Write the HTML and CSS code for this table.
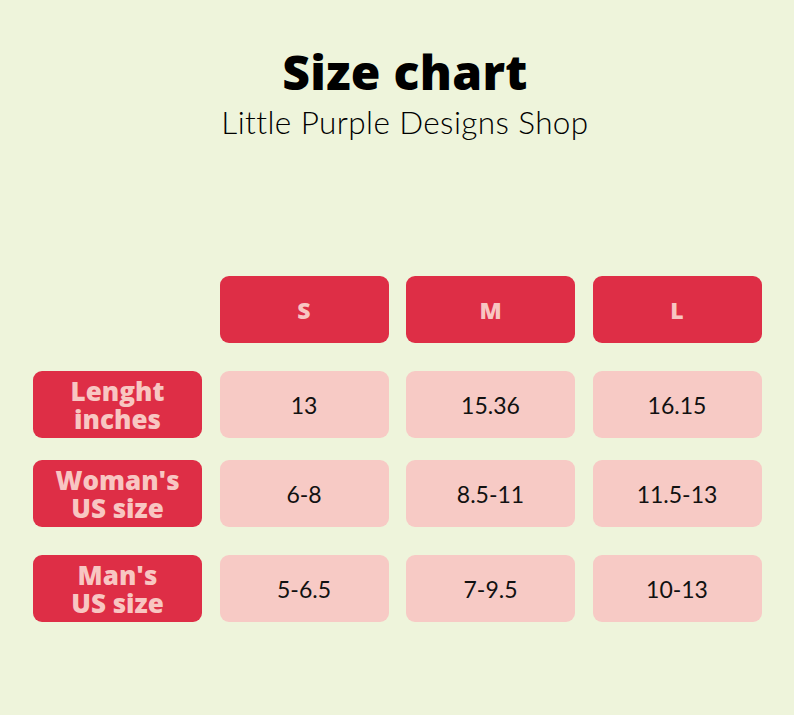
FILE: index.html
```html
<!DOCTYPE html>
<html>
<head>
<meta charset="utf-8">
<link rel="stylesheet" href="styles.css">
</head>
<body>
<div class="page">
  <header class="head">
    <h1 class="title">Size chart</h1>
    <p class="subtitle">Little Purple Designs Shop</p>
  </header>
  <div class="chart">
    <div class="row row-head">
      <div class="spacer"></div>
      <div class="cell hcell">S</div>
      <div class="cell hcell">M</div>
      <div class="cell hcell">L</div>
    </div>
    <div class="row row-1">
      <div class="cell label">Lenght<br>inches</div>
      <div class="cell val">13</div>
      <div class="cell val">15.36</div>
      <div class="cell val">16.15</div>
    </div>
    <div class="row row-2">
      <div class="cell label">Woman's<br>US size</div>
      <div class="cell val">6-8</div>
      <div class="cell val">8.5-11</div>
      <div class="cell val">11.5-13</div>
    </div>
    <div class="row row-3">
      <div class="cell label">Man's<br>US size</div>
      <div class="cell val">5-6.5</div>
      <div class="cell val">7-9.5</div>
      <div class="cell val">10-13</div>
    </div>
  </div>
</div>
</body>
</html>
```
FILE: styles.css
```css
html, body {
  margin: 0;
  padding: 0;
  background: #eef4db;
}
.page {
  width: 794px;
  height: 715px;
  box-sizing: border-box;
  padding-top: 42px;
  font-family: "Open Sans", sans-serif;
}
.head {
  text-align: center;
  padding-left: 16px;
}
.title {
  margin: 0;
  font-family: "Open Sans", sans-serif;
  font-weight: 800;
  font-size: 48px;
  line-height: 60px;
  color: #000;
  letter-spacing: 0.3px;
}
.subtitle {
  margin: 0;
  font-family: "Lato", sans-serif;
  font-weight: 300;
  font-size: 31.5px;
  line-height: 40px;
  color: #000;
  letter-spacing: 0.4px;
}
.chart {
  margin-top: 134px;
  padding-left: 33px;
}
.row {
  display: grid;
  grid-template-columns: repeat(4, 169px);
  column-gap: 17.5px;
  height: 67px;
}
.row-1 { margin-top: 28px; }
.row-2 { margin-top: 22px; }
.row-3 { margin-top: 28px; }
.cell {
  display: flex;
  align-items: center;
  justify-content: center;
  text-align: center;
  border-radius: 9px;
}
.hcell, .label {
  background: #de2e46;
  color: #f8c6c2;
  font-weight: 800;
}
.hcell {
  font-size: 23px;
}
.label {
  font-size: 26px;
  line-height: 28px;
  padding-top: 1px;
  box-sizing: border-box;
}
.val {
  background: #f7cac5;
  color: #111;
  font-family: "Lato", sans-serif;
  font-size: 23px;
  font-weight: 400;
}
```
